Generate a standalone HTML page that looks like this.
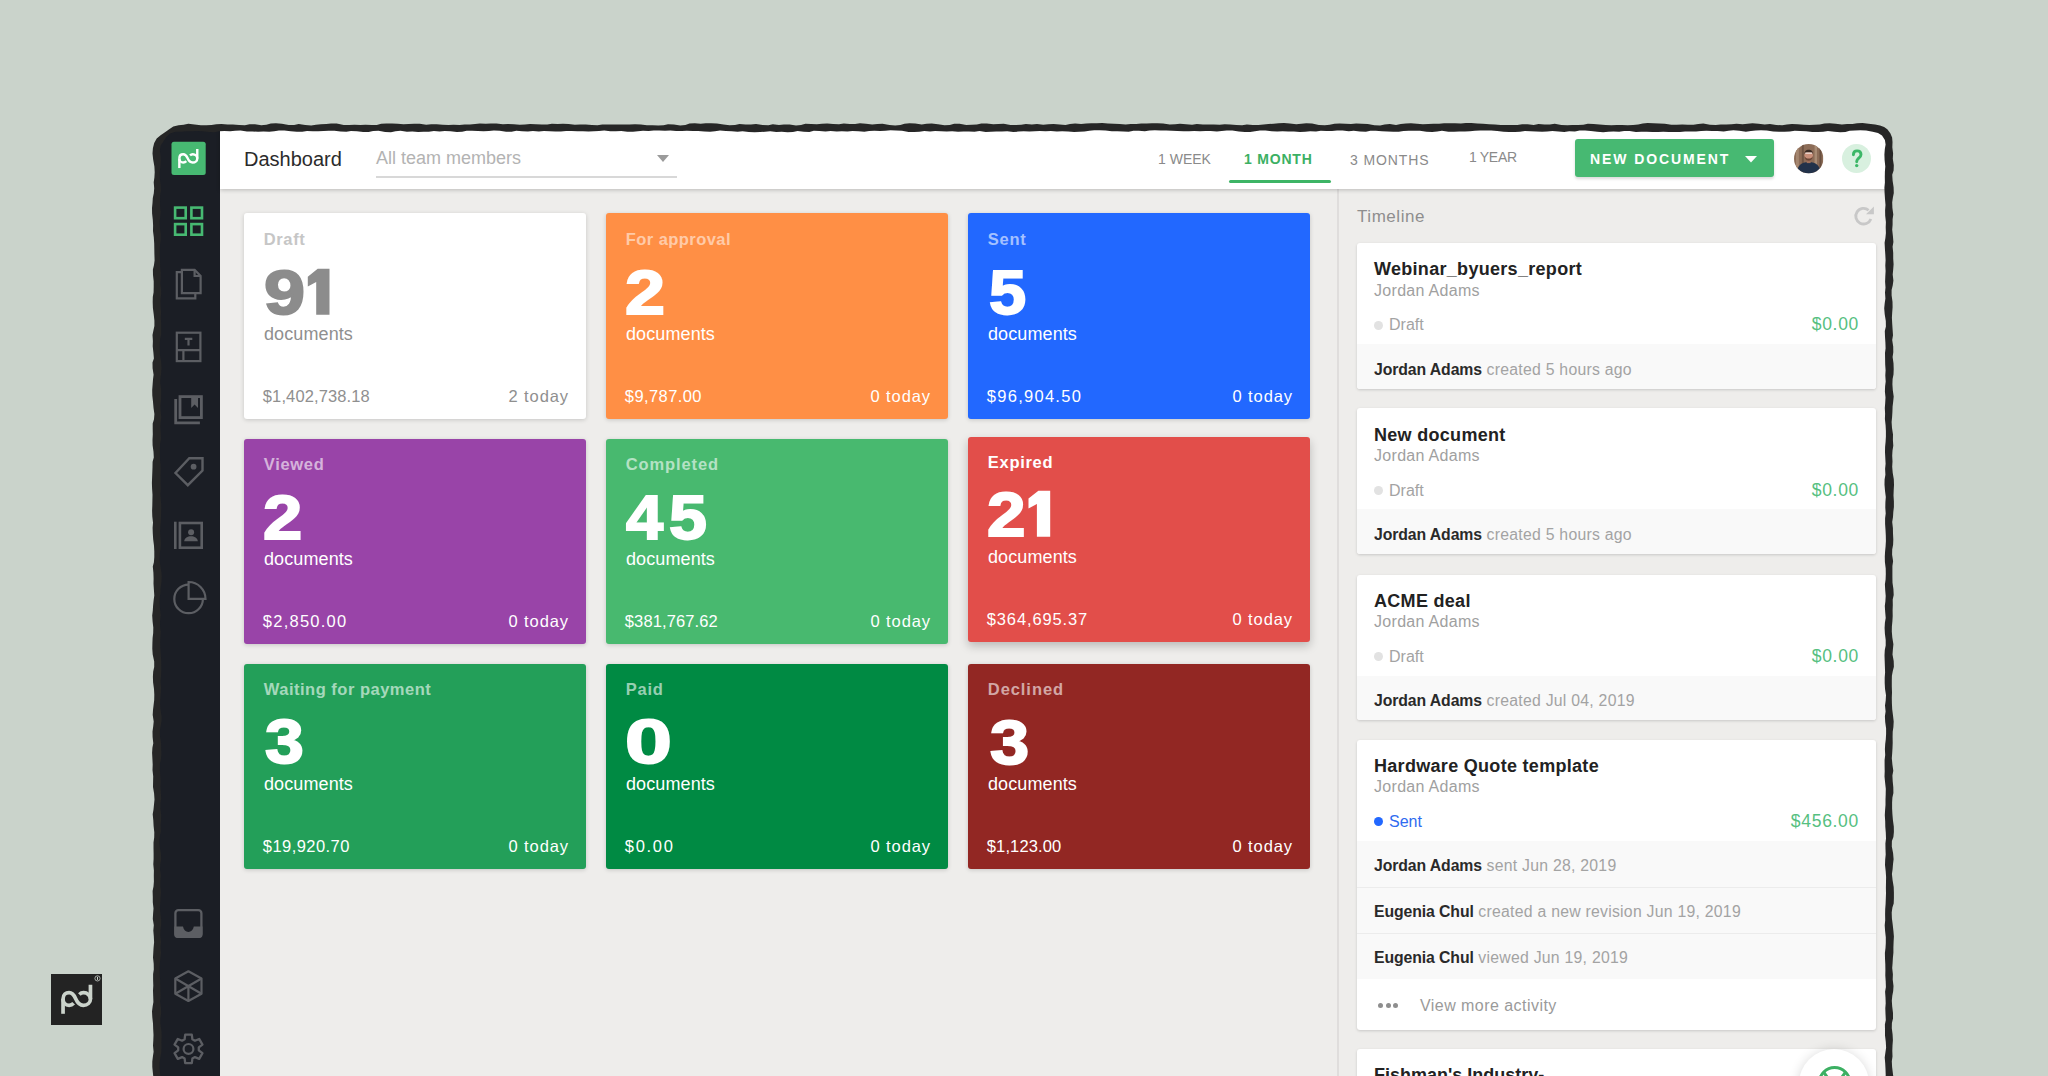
<!DOCTYPE html>
<html><head><meta charset="utf-8"><title>Dashboard</title>
<style>
html,body{margin:0;padding:0;}
body{width:2048px;height:1076px;overflow:hidden;position:relative;background:#cad3cb;font-family:"Liberation Sans",sans-serif;}
.t{position:absolute;white-space:nowrap;}
.r{position:absolute;}
svg{position:absolute;overflow:visible;}
</style></head><body>
<div class="r" style="left:156px;top:127px;width:70px;height:1000px;background:#1b1e25;border-radius:26px 0 0 0;"></div>
<div class="r" style="left:220px;top:189px;width:1670px;height:900px;background:#eeedeb;"></div>
<div class="r" style="left:1337px;top:189px;width:2px;height:900px;background:#dfdddc;"></div>
<div class="r" style="left:220px;top:127.5px;width:1670px;height:61.5px;background:#fff;box-shadow:0 1px 4px rgba(0,0,0,.22);z-index:2;border-radius:0 15px 0 0;"></div>
<div style="position:absolute;left:0;top:0;z-index:3">
<div class="t" style="left:244px;top:147.57px;font-size:20px;line-height:23.00px;color:#2b2b2b;font-weight:400;letter-spacing:0px;">Dashboard</div>
<div class="t" style="left:376px;top:148.41px;font-size:18px;line-height:20.70px;color:#b3b3b3;font-weight:400;letter-spacing:0px;">All team members</div>
<div class="r" style="left:376px;top:176px;width:301px;height:2px;background:#d8d8d8;"></div>
<svg style="left:657px;top:155px" width="12" height="7"><path d="M0 0H12L6 7Z" fill="#9b9b9b"/></svg>
<div class="t" style="left:1158px;top:151.10px;font-size:14px;line-height:16.10px;color:#8a8a8a;font-weight:400;letter-spacing:0px;">1 WEEK</div>
<div class="t" style="left:1244px;top:150.60px;font-size:14px;line-height:16.10px;color:#3cb063;font-weight:700;letter-spacing:0.8px;">1 MONTH</div>
<div class="r" style="left:1229px;top:180px;width:101.5px;height:2.5px;background:#3db465;border-radius:2px;"></div>
<div class="t" style="left:1350px;top:151.60px;font-size:14px;line-height:16.10px;color:#8a8a8a;font-weight:400;letter-spacing:0.9px;">3 MONTHS</div>
<div class="t" style="left:1469px;top:149.10px;font-size:14px;line-height:16.10px;color:#8a8a8a;font-weight:400;letter-spacing:-0.3px;">1 YEAR</div>
<div class="r" style="left:1575px;top:139px;width:199px;height:38px;background:#47b972;border-radius:3px;box-shadow:0 2px 3px rgba(0,0,0,.15);"></div>
<div class="t" style="left:1590px;top:151.40px;font-size:14px;line-height:16.10px;color:#fff;font-weight:700;letter-spacing:1.9px;">NEW DOCUMENT</div>
<svg style="left:1745px;top:156px" width="12" height="7"><path d="M0 0H12L6 6.5Z" fill="#fff"/></svg>
<svg style="left:1793.6px;top:143.6px" width="29.4" height="29.4" viewBox="0 0 30 30"><defs><clipPath id="av"><circle cx="15" cy="15" r="15"/></clipPath></defs><g clip-path="url(#av)"><rect width="30" height="30" fill="#8c6c57"/><rect x="2" width="3" height="30" fill="#a4866f"/><rect x="8" width="2" height="30" fill="#6f5444"/><rect x="21" width="2.5" height="30" fill="#a88b74"/><rect x="26" width="2" height="30" fill="#6a5040"/><path d="M3 30C3 23 7 18.5 15 18.5C23 18.5 27 23 27 30Z" fill="#22324a"/><rect x="13" y="15.5" width="4" height="4" fill="#9c6f5a"/><ellipse cx="15" cy="11.5" rx="4.3" ry="5.3" fill="#c98f7a"/><path d="M10.8 12.5C11 15.5 12.6 17 15 17C17.4 17 19 15.5 19.2 12.5C18.3 14.2 17 14.8 15 14.8C13 14.8 11.7 14.2 10.8 12.5Z" fill="#6a4636"/><path d="M10.7 10C10.7 6.8 12.5 5.8 15 5.8C17.5 5.8 19.3 6.8 19.3 10C18.3 8.8 17 8.6 15 8.6C13 8.6 11.7 8.8 10.7 10Z" fill="#3a2b24"/><rect x="11.5" y="8.6" width="7" height="1.6" fill="#e8d0c8"/></g></svg>
<div class="r" style="left:1842px;top:144px;width:29px;height:29px;background:#d8f0df;border-radius:50%;"></div>
<svg style="left:0;top:0" width="2048" height="1076"><path d="M1853.4 154.8C1853.4 152.2 1855 150.9 1857.1 150.9C1859.4 150.9 1861 152.4 1861 154.6C1861 156.8 1859.1 157.8 1857.9 159C1857.1 159.8 1856.7 160.6 1856.7 161.8" fill="none" stroke="#3cb767" stroke-width="2.9" stroke-linecap="round"/><circle cx="1856.7" cy="165.6" r="1.7" fill="#3cb767"/></svg>
</div>
<div class="r" style="left:244px;top:213px;width:342px;height:205.5px;background:#ffffff;border-radius:3px;box-shadow:0 1px 4px rgba(0,0,0,.17);"></div>
<div class="t" style="left:263.8px;top:229.80px;font-size:16.5px;line-height:18.97px;color:#c6c6c6;font-weight:700;letter-spacing:0.62px;">Draft</div>
<div class="t" style="left:264.15px;top:258.00px;font:700 64px/70px 'Liberation Sans',sans-serif;color:#8c8c8c;-webkit-text-stroke:2px #8c8c8c;transform:scale(1.1545,0.98);transform-origin:0 0">9</div>
<svg style="left:0;top:0" width="2048" height="1076"><path d="M317.70 268.80H329.50V314.80H316.20V282.10L307.80 286.60V276.70Z" fill="#8c8c8c"/></svg>
<div class="t" style="left:264px;top:323.81px;font-size:18px;line-height:20.70px;color:#8f8f8f;font-weight:400;letter-spacing:0.1px;">documents</div>
<div class="t" style="left:262.8px;top:386.80px;font-size:16.5px;line-height:18.97px;color:#8f8f8f;font-weight:400;letter-spacing:0.12px;">$1,402,738.18</div>
<div class="t" style="right:1479px;top:386.80px;font-size:16.5px;line-height:18.97px;color:#8f8f8f;font-weight:400;letter-spacing:0.9px;">2 today</div>
<div class="r" style="left:606px;top:213px;width:342px;height:205.5px;background:#ff8f45;border-radius:3px;box-shadow:0 1px 4px rgba(0,0,0,.17);"></div>
<div class="t" style="left:625.8px;top:229.80px;font-size:16.5px;line-height:18.97px;color:rgba(255,255,255,.55);font-weight:700;letter-spacing:0.44px;">For approval</div>
<div class="t" style="left:625.08px;top:258.20px;font:700 64px/70px 'Liberation Sans',sans-serif;color:#fff;-webkit-text-stroke:2px #fff;transform:scale(1.1242,0.98);transform-origin:0 0">2</div>
<div class="t" style="left:626px;top:323.81px;font-size:18px;line-height:20.70px;color:#fff;font-weight:400;letter-spacing:0.1px;">documents</div>
<div class="t" style="left:624.8px;top:386.80px;font-size:16.5px;line-height:18.97px;color:#fff;font-weight:400;letter-spacing:0.41px;">$9,787.00</div>
<div class="t" style="right:1117px;top:386.80px;font-size:16.5px;line-height:18.97px;color:#fff;font-weight:400;letter-spacing:0.9px;">0 today</div>
<div class="r" style="left:968px;top:213px;width:342px;height:205.5px;background:#2268ff;border-radius:3px;box-shadow:0 1px 4px rgba(0,0,0,.17);"></div>
<div class="t" style="left:987.8px;top:229.80px;font-size:16.5px;line-height:18.97px;color:rgba(255,255,255,.6);font-weight:700;letter-spacing:0.7px;">Sent</div>
<div class="t" style="left:988.76px;top:258.20px;font:700 64px/70px 'Liberation Sans',sans-serif;color:#fff;-webkit-text-stroke:2px #fff;transform:scale(1.0441,0.98);transform-origin:0 0">5</div>
<div class="t" style="left:988px;top:323.81px;font-size:18px;line-height:20.70px;color:#fff;font-weight:400;letter-spacing:0.1px;">documents</div>
<div class="t" style="left:986.8px;top:386.80px;font-size:16.5px;line-height:18.97px;color:#fff;font-weight:400;letter-spacing:1.27px;">$96,904.50</div>
<div class="t" style="right:755px;top:386.80px;font-size:16.5px;line-height:18.97px;color:#fff;font-weight:400;letter-spacing:0.9px;">0 today</div>
<div class="r" style="left:244px;top:438.5px;width:342px;height:205.5px;background:#9944a8;border-radius:3px;box-shadow:0 1px 4px rgba(0,0,0,.17);"></div>
<div class="t" style="left:263.8px;top:455.30px;font-size:16.5px;line-height:18.97px;color:rgba(255,255,255,.6);font-weight:700;letter-spacing:0.68px;">Viewed</div>
<div class="t" style="left:262.90px;top:482.50px;font:700 64px/70px 'Liberation Sans',sans-serif;color:#fff;-webkit-text-stroke:2px #fff;transform:scale(1.1030,0.98);transform-origin:0 0">2</div>
<div class="t" style="left:264px;top:549.31px;font-size:18px;line-height:20.70px;color:#fff;font-weight:400;letter-spacing:0.1px;">documents</div>
<div class="t" style="left:262.8px;top:612.30px;font-size:16.5px;line-height:18.97px;color:#fff;font-weight:400;letter-spacing:1.25px;">$2,850.00</div>
<div class="t" style="right:1479px;top:612.30px;font-size:16.5px;line-height:18.97px;color:#fff;font-weight:400;letter-spacing:0.9px;">0 today</div>
<div class="r" style="left:606px;top:438.5px;width:342px;height:205.5px;background:#48b96f;border-radius:3px;box-shadow:0 1px 4px rgba(0,0,0,.17);"></div>
<div class="t" style="left:625.8px;top:455.30px;font-size:16.5px;line-height:18.97px;color:rgba(255,255,255,.6);font-weight:700;letter-spacing:0.88px;">Completed</div>
<div class="t" style="left:626.40px;top:483.20px;font:700 64px/70px 'Liberation Sans',sans-serif;color:#fff;-webkit-text-stroke:2px #fff;transform:scale(1.0444,0.98);transform-origin:0 0">4</div>
<div class="t" style="left:668.94px;top:483.20px;font:700 64px/70px 'Liberation Sans',sans-serif;color:#fff;-webkit-text-stroke:2px #fff;transform:scale(1.0647,0.98);transform-origin:0 0">5</div>
<div class="t" style="left:626px;top:549.31px;font-size:18px;line-height:20.70px;color:#fff;font-weight:400;letter-spacing:0.1px;">documents</div>
<div class="t" style="left:624.8px;top:612.30px;font-size:16.5px;line-height:18.97px;color:#fff;font-weight:400;letter-spacing:0.12px;">$381,767.62</div>
<div class="t" style="right:1117px;top:612.30px;font-size:16.5px;line-height:18.97px;color:#fff;font-weight:400;letter-spacing:0.9px;">0 today</div>
<div class="r" style="left:968px;top:436.5px;width:342px;height:205.5px;background:#e24e4a;border-radius:3px;box-shadow:0 4px 10px rgba(0,0,0,.22);"></div>
<div class="t" style="left:987.8px;top:453.30px;font-size:16.5px;line-height:18.97px;color:#fff;font-weight:700;letter-spacing:0.7px;">Expired</div>
<div class="t" style="left:987.42px;top:479.90px;font:700 64px/70px 'Liberation Sans',sans-serif;color:#fff;-webkit-text-stroke:2px #fff;transform:scale(1.0818,0.98);transform-origin:0 0">2</div>
<svg style="left:0;top:0" width="2048" height="1076"><path d="M1038.40 490.70H1050.20V536.70H1036.90V504.00L1028.50 508.50V498.60Z" fill="#fff"/></svg>
<div class="t" style="left:988px;top:547.31px;font-size:18px;line-height:20.70px;color:#fff;font-weight:400;letter-spacing:0.1px;">documents</div>
<div class="t" style="left:986.8px;top:610.30px;font-size:16.5px;line-height:18.97px;color:#fff;font-weight:400;letter-spacing:0.86px;">$364,695.37</div>
<div class="t" style="right:755px;top:610.30px;font-size:16.5px;line-height:18.97px;color:#fff;font-weight:400;letter-spacing:0.9px;">0 today</div>
<div class="r" style="left:244px;top:663.5px;width:342px;height:205.5px;background:#239f59;border-radius:3px;box-shadow:0 1px 4px rgba(0,0,0,.17);"></div>
<div class="t" style="left:263.8px;top:680.30px;font-size:16.5px;line-height:18.97px;color:rgba(255,255,255,.6);font-weight:700;letter-spacing:0.5px;">Waiting for payment</div>
<div class="t" style="left:265.10px;top:707.20px;font:700 64px/70px 'Liberation Sans',sans-serif;color:#fff;-webkit-text-stroke:2px #fff;transform:scale(1.0912,0.98);transform-origin:0 0">3</div>
<div class="t" style="left:264px;top:774.31px;font-size:18px;line-height:20.70px;color:#fff;font-weight:400;letter-spacing:0.1px;">documents</div>
<div class="t" style="left:262.8px;top:837.30px;font-size:16.5px;line-height:18.97px;color:#fff;font-weight:400;letter-spacing:0.44px;">$19,920.70</div>
<div class="t" style="right:1479px;top:837.30px;font-size:16.5px;line-height:18.97px;color:#fff;font-weight:400;letter-spacing:0.9px;">0 today</div>
<div class="r" style="left:606px;top:663.5px;width:342px;height:205.5px;background:#008a43;border-radius:3px;box-shadow:0 1px 4px rgba(0,0,0,.17);"></div>
<div class="t" style="left:625.8px;top:680.30px;font-size:16.5px;line-height:18.97px;color:rgba(255,255,255,.6);font-weight:700;letter-spacing:0.77px;">Paid</div>
<div class="t" style="left:624.96px;top:707.20px;font:700 64px/70px 'Liberation Sans',sans-serif;color:#fff;-webkit-text-stroke:2px #fff;transform:scale(1.3188,0.98);transform-origin:0 0">0</div>
<div class="t" style="left:626px;top:774.31px;font-size:18px;line-height:20.70px;color:#fff;font-weight:400;letter-spacing:0.1px;">documents</div>
<div class="t" style="left:624.8px;top:837.30px;font-size:16.5px;line-height:18.97px;color:#fff;font-weight:400;letter-spacing:1.7px;">$0.00</div>
<div class="t" style="right:1117px;top:837.30px;font-size:16.5px;line-height:18.97px;color:#fff;font-weight:400;letter-spacing:0.9px;">0 today</div>
<div class="r" style="left:968px;top:663.5px;width:342px;height:205.5px;background:#922723;border-radius:3px;box-shadow:0 1px 4px rgba(0,0,0,.17);"></div>
<div class="t" style="left:987.8px;top:680.30px;font-size:16.5px;line-height:18.97px;color:rgba(255,255,255,.6);font-weight:700;letter-spacing:0.93px;">Declined</div>
<div class="t" style="left:989.60px;top:707.50px;font:700 64px/70px 'Liberation Sans',sans-serif;color:#fff;-webkit-text-stroke:2px #fff;transform:scale(1.1000,0.98);transform-origin:0 0">3</div>
<div class="t" style="left:988px;top:774.31px;font-size:18px;line-height:20.70px;color:#fff;font-weight:400;letter-spacing:0.1px;">documents</div>
<div class="t" style="left:986.8px;top:837.30px;font-size:16.5px;line-height:18.97px;color:#fff;font-weight:400;letter-spacing:0.12px;">$1,123.00</div>
<div class="t" style="right:755px;top:837.30px;font-size:16.5px;line-height:18.97px;color:#fff;font-weight:400;letter-spacing:0.9px;">0 today</div>
<div class="t" style="left:1357px;top:207.33px;font-size:17px;line-height:19.55px;color:#8e8e8e;font-weight:400;letter-spacing:0.55px;">Timeline</div>
<svg style="left:0;top:0" width="2048" height="1076"><path d="M1870.9 218.9A7.8 7.8 0 1 1 1868.6 210.2" fill="none" stroke="#c8c8c8" stroke-width="2.8"/><path d="M1873.9 206.4V214.3H1866Z" fill="#c8c8c8"/></svg>
<div class="r" style="left:1356.5px;top:243px;width:519.5px;height:145.5px;background:#fff;border-radius:3px;box-shadow:0 1px 3px rgba(0,0,0,.16);"></div>
<div class="t" style="left:1374px;top:259.41px;font-size:18px;line-height:20.70px;color:#222;font-weight:700;letter-spacing:0.3px;">Webinar_byuers_report</div>
<div class="t" style="left:1374px;top:281.76px;font-size:16px;line-height:18.40px;color:#a0a0a0;font-weight:400;letter-spacing:0.3px;">Jordan Adams</div>
<div class="r" style="left:1373.8px;top:320.6px;width:9px;height:9px;background:#e2e2e2;border-radius:50%;"></div>
<div class="t" style="left:1389px;top:316.26px;font-size:16px;line-height:18.40px;color:#a3a3a3;font-weight:400;letter-spacing:0px;">Draft</div>
<div class="t" style="right:189px;top:314.37px;font-size:17.5px;line-height:20.12px;color:#56c07f;font-weight:400;letter-spacing:0.7px;">$0.00</div>
<div class="r" style="left:1356.5px;top:344px;width:519.5px;height:44.5px;background:#f9f9f9;border-radius:0 0 3px 3px;"></div>
<div class="t" style="left:1374px;top:360.94px;font-size:15.8px;line-height:18.17px;color:#a3a3a3;font-weight:400;letter-spacing:0.25px;"><b style="color:#2a2a2a;letter-spacing:-0.1px">Jordan Adams</b> created 5 hours ago</div>
<div class="r" style="left:1356.5px;top:408.3px;width:519.5px;height:146.2px;background:#fff;border-radius:3px;box-shadow:0 1px 3px rgba(0,0,0,.16);"></div>
<div class="t" style="left:1374px;top:424.71px;font-size:18px;line-height:20.70px;color:#222;font-weight:700;letter-spacing:0.3px;">New document</div>
<div class="t" style="left:1374px;top:447.06px;font-size:16px;line-height:18.40px;color:#a0a0a0;font-weight:400;letter-spacing:0.3px;">Jordan Adams</div>
<div class="r" style="left:1373.8px;top:485.9px;width:9px;height:9px;background:#e2e2e2;border-radius:50%;"></div>
<div class="t" style="left:1389px;top:481.56px;font-size:16px;line-height:18.40px;color:#a3a3a3;font-weight:400;letter-spacing:0px;">Draft</div>
<div class="t" style="right:189px;top:479.67px;font-size:17.5px;line-height:20.12px;color:#56c07f;font-weight:400;letter-spacing:0.7px;">$0.00</div>
<div class="r" style="left:1356.5px;top:509.3px;width:519.5px;height:45.19999999999999px;background:#f9f9f9;border-radius:0 0 3px 3px;"></div>
<div class="t" style="left:1374px;top:526.24px;font-size:15.8px;line-height:18.17px;color:#a3a3a3;font-weight:400;letter-spacing:0.25px;"><b style="color:#2a2a2a;letter-spacing:-0.1px">Jordan Adams</b> created 5 hours ago</div>
<div class="r" style="left:1356.5px;top:574.5px;width:519.5px;height:145.5px;background:#fff;border-radius:3px;box-shadow:0 1px 3px rgba(0,0,0,.16);"></div>
<div class="t" style="left:1374px;top:590.91px;font-size:18px;line-height:20.70px;color:#222;font-weight:700;letter-spacing:0.3px;">ACME deal</div>
<div class="t" style="left:1374px;top:613.26px;font-size:16px;line-height:18.40px;color:#a0a0a0;font-weight:400;letter-spacing:0.3px;">Jordan Adams</div>
<div class="r" style="left:1373.8px;top:652.1px;width:9px;height:9px;background:#e2e2e2;border-radius:50%;"></div>
<div class="t" style="left:1389px;top:647.76px;font-size:16px;line-height:18.40px;color:#a3a3a3;font-weight:400;letter-spacing:0px;">Draft</div>
<div class="t" style="right:189px;top:645.87px;font-size:17.5px;line-height:20.12px;color:#56c07f;font-weight:400;letter-spacing:0.7px;">$0.00</div>
<div class="r" style="left:1356.5px;top:675.5px;width:519.5px;height:44.5px;background:#f9f9f9;border-radius:0 0 3px 3px;"></div>
<div class="t" style="left:1374px;top:692.44px;font-size:15.8px;line-height:18.17px;color:#a3a3a3;font-weight:400;letter-spacing:0.25px;"><b style="color:#2a2a2a;letter-spacing:-0.1px">Jordan Adams</b> created Jul 04, 2019</div>
<div class="r" style="left:1356.5px;top:739.5px;width:519.5px;height:290px;background:#fff;border-radius:3px;box-shadow:0 1px 3px rgba(0,0,0,.16);"></div>
<div class="t" style="left:1374px;top:755.91px;font-size:18px;line-height:20.70px;color:#222;font-weight:700;letter-spacing:0.3px;">Hardware Quote template</div>
<div class="t" style="left:1374px;top:778.26px;font-size:16px;line-height:18.40px;color:#a0a0a0;font-weight:400;letter-spacing:0.3px;">Jordan Adams</div>
<div class="r" style="left:1373.8px;top:817.1px;width:9px;height:9px;background:#2268ff;border-radius:50%;"></div>
<div class="t" style="left:1389px;top:812.76px;font-size:16px;line-height:18.40px;color:#2f6bf0;font-weight:400;letter-spacing:0px;">Sent</div>
<div class="t" style="right:189px;top:810.87px;font-size:17.5px;line-height:20.12px;color:#56c07f;font-weight:400;letter-spacing:0.7px;">$456.00</div>
<div class="r" style="left:1356.5px;top:840.5px;width:519.5px;height:46px;background:#f9f9f9;"></div>
<div class="t" style="left:1374px;top:857.44px;font-size:15.8px;line-height:18.17px;color:#a3a3a3;font-weight:400;letter-spacing:0.25px;"><b style="color:#2a2a2a;letter-spacing:-0.1px">Jordan Adams</b> sent Jun 28, 2019</div>
<div class="r" style="left:1356.5px;top:886.5px;width:519.5px;height:46px;background:#f9f9f9;border-top:1px solid #ececec;box-sizing:border-box;"></div>
<div class="t" style="left:1374px;top:903.44px;font-size:15.8px;line-height:18.17px;color:#a3a3a3;font-weight:400;letter-spacing:0.25px;"><b style="color:#2a2a2a;letter-spacing:-0.1px">Eugenia Chul</b> created a new revision Jun 19, 2019</div>
<div class="r" style="left:1356.5px;top:932.5px;width:519.5px;height:46px;background:#f9f9f9;border-top:1px solid #ececec;box-sizing:border-box;"></div>
<div class="t" style="left:1374px;top:949.44px;font-size:15.8px;line-height:18.17px;color:#a3a3a3;font-weight:400;letter-spacing:0.25px;"><b style="color:#2a2a2a;letter-spacing:-0.1px">Eugenia Chul</b> viewed Jun 19, 2019</div>
<div class="r" style="left:1378px;top:1002.5px;width:5px;height:5px;background:#8e8e8e;border-radius:50%;"></div>
<div class="r" style="left:1385.5px;top:1002.5px;width:5px;height:5px;background:#8e8e8e;border-radius:50%;"></div>
<div class="r" style="left:1393px;top:1002.5px;width:5px;height:5px;background:#8e8e8e;border-radius:50%;"></div>
<div class="t" style="left:1420px;top:996.76px;font-size:16px;line-height:18.40px;color:#9a9a9a;font-weight:400;letter-spacing:0.45px;">View more activity</div>
<div class="r" style="left:1356.5px;top:1049px;width:519.5px;height:100px;background:#fff;border-radius:3px;box-shadow:0 1px 3px rgba(0,0,0,.16);"></div>
<div class="t" style="left:1374px;top:1065.41px;font-size:18px;line-height:20.70px;color:#222;font-weight:700;letter-spacing:0px;">Fishman's Industry-</div>
<div class="r" style="left:1799px;top:1049.3px;width:70px;height:70px;background:#fff;border-radius:50%;box-shadow:0 1px 12px rgba(0,0,0,.16);z-index:4;"></div>
<svg style="left:0;top:0;z-index:4" width="2048" height="1076"><circle cx="1834.6" cy="1082.8" r="15.3" fill="none" stroke="#3cb063" stroke-width="3"/><path d="M1823.5 1072L1830 1081M1845.7 1072L1839.2 1081" stroke="#3cb063" stroke-width="3" fill="none"/></svg>
<svg style="left:0;top:0" width="2048" height="1076" viewBox="0 0 2048 1076">
<rect x="171.5" y="141.7" width="34.2" height="33.2" rx="2.5" fill="#47b972"/>
<g transform="translate(171.5 141.7) scale(0.654)" fill="none" stroke="#fff" stroke-width="3.7"><path d="M12 40.3V25.5"/><path d="M12 25.5C12 21 14.8 19.2 18 19.2C21.5 19.2 23 21.5 24.5 25C26 28.5 28 31.8 32.3 31.8C36.5 31.8 39.4 29 39.4 25.5V11.2"/><path d="M28.3 21C29.5 19.8 31 19.2 32.5 19.2C36.3 19.2 39.4 22 39.4 25.5"/><path d="M12 25.5C12 29 14.5 31.8 18 31.8C20 31.8 21.5 31 22.6 29.8"/></g>
<g fill="none" stroke="#47b972" stroke-width="2.6"><rect x="175.1" y="207.6" width="10.6" height="10.6"/><rect x="191.4" y="207.6" width="10.6" height="10.6"/><rect x="175.1" y="224.1" width="10.6" height="10.6"/><rect x="191.4" y="224.1" width="10.6" height="10.6"/></g>
<g fill="none" stroke="#5c5e63" stroke-width="2.2">
<path d="M181.9 269.8H194.6L200.6 276V293.2H181.9Z"/><path d="M194.6 269.8V276H200.6"/><path d="M181.9 272.2H176.8V298.3H195.3V293.2"/>
<rect x="176.8" y="332.7" width="23.6" height="28.4"/><path d="M176.8 350.2H200.4M183.4 350.2V361.1M184.8 338.8H192.3M188.5 338.8V345.6"/>
</g>
<g fill="none" stroke="#5c5e63" stroke-width="2.8">
<rect x="180" y="396.6" width="21.4" height="21"/><path d="M175.7 399.1V422.8H199.9"/>
</g>
<path d="M191.2 396.6H198V408L194.6 404.6L191.2 408Z" fill="#5c5e63"/>
<g fill="none" stroke="#5c5e63" stroke-width="2.4" stroke-linejoin="miter">
<path d="M189.3 458.3H202.5V470.6L187.8 485.2L175.5 473Z"/>
</g>
<circle cx="193.6" cy="466.7" r="2.9" fill="#5c5e63"/>
<g fill="none" stroke="#5c5e63" stroke-width="2.6"><rect x="179.9" y="523" width="21.8" height="24.7"/><path d="M175.3 521.7V549"/></g>
<circle cx="191.1" cy="532.3" r="3" fill="#5c5e63"/><path d="M184.2 541.2C184.5 537.8 187.6 536.2 191 536.2C194.4 536.2 197.5 537.8 197.8 541.2Z" fill="#5c5e63"/>
<g fill="none" stroke="#5c5e63" stroke-width="2.2"><path d="M188.6 584.6A14.3 14.3 0 1 0 202.9 598.9"/><path d="M188.6 598.9V582A16.9 16.9 0 0 1 205.5 598.9Z"/></g>
<rect x="175.4" y="910.2" width="26" height="26.6" rx="3" fill="none" stroke="#5c5e63" stroke-width="2.3"/>
<path d="M174.3 926.6H183C183.5 930 185.8 932 188.4 932C191 932 193.3 930 193.8 926.6H202.5V935C202.5 936.8 201 938 199.3 938H177.5C175.8 938 174.3 936.8 174.3 935Z" fill="#5c5e63"/>
<g fill="none" stroke="#5c5e63" stroke-width="2.2" stroke-linejoin="round"><path d="M188.4 971.3L201.5 978.5V993.8L188.4 1001L175.3 993.8V978.5Z"/><path d="M175.3 978.5L201.5 993.8M201.5 978.5L175.3 993.8M188.4 986.1V1001"/></g>
</svg>
<svg style="left:0;top:0" width="2048" height="1076"><path d="M184.60 1039.26 L185.22 1034.67 L191.78 1034.67 L192.40 1039.26 L194.90 1040.70 L199.18 1038.94 L202.46 1044.63 L198.80 1047.45 L198.80 1050.35 L202.46 1053.17 L199.18 1058.86 L194.90 1057.10 L192.40 1058.54 L191.78 1063.13 L185.22 1063.13 L184.60 1058.54 L182.10 1057.10 L177.82 1058.86 L174.54 1053.17 L178.20 1050.35 L178.20 1047.45 L174.54 1044.63 L177.82 1038.94 L182.10 1040.70Z" fill="none" stroke="#5c5e63" stroke-width="2.3" stroke-linejoin="round"/><circle cx="188.5" cy="1048.9" r="4.9" fill="none" stroke="#5c5e63" stroke-width="2.2"/></svg>
<div class="r" style="left:51.05px;top:973.5px;width:51.3px;height:51.3px;background:#232323;"></div>
<svg style="left:0;top:0" width="2048" height="1076"><g transform="translate(51.05 973.5)" fill="none" stroke="#cbd3cb" stroke-width="3.7"><path d="M12 40.3V25.5"/><path d="M12 25.5C12 21 14.8 19.2 18 19.2C21.5 19.2 23 21.5 24.5 25C26 28.5 28 31.8 32.3 31.8C36.5 31.8 39.4 29 39.4 25.5V11.2"/><path d="M28.3 21C29.5 19.8 31 19.2 32.5 19.2C36.3 19.2 39.4 22 39.4 25.5"/><path d="M12 25.5C12 29 14.5 31.8 18 31.8C20 31.8 21.5 31 22.6 29.8"/></g><circle cx="97.5" cy="978.4" r="2.6" fill="none" stroke="#b8bdb8" stroke-width="0.9"/><path d="M97.5 976.9V979.9" stroke="#cbd3cb" stroke-width="1"/></svg>
<svg style="left:0;top:0;z-index:5" width="2048" height="1076"><path fill-rule="evenodd" fill="#262626" d="M152.9 1199.6 L152.6 1193.8 L153.1 1188.8 L152.6 1182.8 L153.0 1177.7 L152.8 1172.0 L152.4 1166.1 L152.8 1160.9 L152.4 1155.1 L152.6 1149.8 L152.2 1143.9 L152.2 1138.4 L153.1 1133.8 L153.6 1128.8 L152.6 1122.3 L152.6 1116.8 L153.6 1112.3 L154.2 1107.4 L153.7 1101.3 L153.4 1095.6 L153.8 1090.5 L153.0 1084.1 L153.6 1079.2 L152.9 1073.0 L152.3 1066.9 L152.3 1061.4 L152.9 1056.5 L153.6 1051.7 L153.0 1045.6 L153.3 1040.4 L153.5 1035.1 L153.2 1029.3 L153.0 1023.6 L152.3 1017.3 L152.0 1011.6 L152.6 1006.7 L153.4 1002.0 L153.2 996.2 L153.0 990.5 L153.3 985.4 L153.1 979.7 L153.1 974.1 L153.8 969.4 L153.7 963.7 L153.0 957.5 L153.3 952.3 L153.6 947.2 L154.1 942.2 L153.8 936.3 L153.3 930.4 L153.8 925.3 L152.8 918.9 L153.1 913.6 L153.5 908.5 L152.8 902.3 L152.8 896.8 L152.6 891.0 L153.5 886.5 L153.9 881.4 L153.8 875.8 L153.9 870.4 L153.3 864.3 L153.6 859.1 L153.6 853.6 L153.5 847.9 L153.5 842.4 L154.2 837.6 L154.3 832.3 L153.6 826.1 L153.3 820.3 L152.7 814.2 L153.5 809.4 L154.0 804.4 L154.5 799.4 L154.1 793.5 L153.0 787.0 L153.1 781.5 L153.2 776.2 L152.5 769.9 L152.7 764.6 L152.4 758.8 L152.1 753.0 L152.4 747.8 L153.3 743.2 L152.6 737.0 L152.5 731.4 L153.2 726.6 L153.7 721.5 L152.7 715.1 L153.0 709.9 L153.6 705.0 L154.2 700.1 L154.3 694.7 L154.0 688.9 L153.1 682.4 L152.9 676.8 L153.2 671.6 L154.2 667.0 L154.2 661.5 L152.7 654.6 L152.3 648.7 L152.4 643.3 L152.6 638.0 L153.2 633.0 L153.3 627.6 L152.6 621.4 L152.2 615.5 L152.8 610.6 L153.1 605.4 L153.6 600.4 L154.3 595.6 L153.9 589.7 L153.5 583.8 L153.6 578.4 L153.4 572.7 L152.8 566.6 L153.9 562.2 L154.3 557.1 L154.3 551.6 L154.0 545.8 L153.2 539.5 L152.8 533.6 L152.6 527.8 L153.0 522.8 L152.3 516.6 L152.1 510.8 L152.3 505.5 L152.4 500.1 L152.5 494.8 L152.1 488.8 L151.9 483.1 L152.1 477.8 L152.3 472.5 L152.5 467.2 L152.6 461.8 L153.8 457.5 L153.5 451.7 L152.6 445.3 L152.5 439.7 L152.8 434.5 L152.7 428.9 L152.7 423.4 L154.0 419.2 L154.4 414.1 L153.5 407.7 L153.0 401.7 L152.3 395.4 L152.2 389.9 L152.6 384.8 L153.0 379.6 L153.6 374.7 L152.6 368.2 L152.5 362.6 L153.9 358.5 L153.4 352.5 L152.7 346.3 L152.9 341.0 L152.5 335.1 L153.4 330.5 L154.4 326.0 L154.4 320.5 L153.7 314.3 L152.9 308.0 L152.7 302.3 L152.8 296.9 L153.6 292.2 L153.7 286.8 L153.7 281.3 L153.0 275.1 L152.9 269.5 L154.0 265.1 L154.6 260.2 L154.4 254.5 L154.3 248.8 L154.2 243.3 L153.8 237.3 L153.0 231.0 L153.1 225.6 L152.8 219.8 L152.1 213.6 L152.0 208.0 L152.5 203.0 L152.8 197.9 L153.8 193.3 L154.2 188.2 L153.7 182.3 L154.4 177.4 L154.7 172.3 L154.4 166.4 L153.2 159.7 L152.5 153.5 L152.9 148.2 L154.2 143.1 L156.7 138.6 L160.6 135.3 L165.0 132.3 L169.2 129.2 L173.3 126.4 L178.5 125.2 L183.7 124.7 L188.3 123.8 L194.6 124.6 L200.9 125.3 L206.3 125.2 L211.5 124.9 L216.3 124.2 L221.4 123.9 L227.6 124.5 L232.9 124.4 L239.1 125.0 L244.9 125.3 L249.5 124.3 L255.0 124.3 L261.3 125.2 L266.4 124.8 L270.8 123.6 L275.9 123.2 L281.9 123.7 L288.7 125.0 L294.1 124.9 L298.7 124.0 L305.2 125.0 L311.2 125.5 L316.0 124.8 L320.9 124.2 L326.3 124.1 L331.1 123.4 L336.7 123.5 L343.7 125.0 L349.2 124.9 L354.5 124.7 L360.4 125.1 L365.5 124.7 L371.5 125.1 L376.8 124.9 L381.2 123.8 L386.4 123.5 L392.0 123.6 L397.6 123.7 L403.5 124.2 L408.8 123.9 L414.2 123.8 L419.7 123.8 L426.2 124.7 L431.2 124.3 L436.6 124.2 L442.6 124.7 L448.5 125.0 L453.6 124.7 L459.5 125.0 L464.6 124.6 L469.9 124.4 L475.1 124.1 L479.9 123.4 L485.7 123.7 L490.9 123.4 L496.4 123.4 L502.9 124.3 L507.9 123.9 L513.8 124.2 L519.8 124.7 L525.0 124.4 L530.1 124.0 L535.9 124.3 L541.7 124.6 L547.3 124.6 L551.9 123.8 L557.7 124.0 L562.9 123.7 L568.6 123.9 L574.9 124.7 L580.2 124.5 L585.8 124.6 L591.8 125.1 L597.4 125.2 L602.3 124.5 L607.7 124.5 L613.1 124.4 L618.7 124.4 L624.4 124.6 L629.6 124.4 L635.1 124.3 L640.9 124.6 L647.0 125.2 L652.5 125.2 L658.2 125.4 L663.5 125.2 L668.0 124.2 L673.9 124.5 L680.2 125.4 L685.4 125.0 L689.5 123.6 L694.8 123.3 L700.6 123.7 L705.7 123.3 L711.2 123.3 L716.9 123.5 L723.5 124.5 L729.6 125.2 L735.0 125.0 L739.5 124.0 L745.6 124.6 L751.0 124.5 L756.0 124.0 L762.6 125.1 L768.3 125.2 L772.9 124.3 L779.0 124.9 L783.9 124.4 L789.6 124.5 L796.0 125.4 L801.1 125.0 L805.4 123.8 L811.1 124.0 L816.8 124.2 L822.0 123.8 L827.2 123.5 L833.1 123.9 L839.0 124.3 L843.8 123.6 L849.8 124.1 L855.1 123.9 L860.0 123.3 L866.0 123.8 L872.2 124.4 L877.4 124.1 L882.5 123.8 L889.4 125.1 L895.2 125.4 L900.4 125.1 L904.5 123.7 L909.6 123.3 L915.3 123.5 L921.7 124.4 L926.6 123.8 L931.8 123.4 L938.0 124.2 L944.6 125.2 L949.8 125.0 L954.2 123.8 L959.6 123.8 L966.3 124.9 L971.7 124.8 L976.9 124.5 L981.3 123.4 L986.8 123.4 L993.3 124.3 L998.5 124.0 L1003.7 123.7 L1010.4 124.9 L1016.0 125.0 L1021.2 124.7 L1025.9 123.9 L1031.9 124.4 L1037.0 123.9 L1043.2 124.7 L1048.4 124.3 L1053.6 124.0 L1059.6 124.6 L1065.5 125.0 L1070.0 123.9 L1075.1 123.5 L1081.1 124.0 L1086.2 123.6 L1091.3 123.2 L1096.8 123.2 L1102.2 123.1 L1108.0 123.4 L1113.8 123.7 L1119.6 124.0 L1125.7 124.5 L1130.8 124.1 L1136.2 124.0 L1141.3 123.6 L1146.7 123.5 L1151.9 123.2 L1157.5 123.3 L1163.1 123.4 L1169.7 124.5 L1175.1 124.3 L1180.0 123.7 L1186.1 124.3 L1192.1 124.8 L1196.8 124.0 L1202.9 124.6 L1208.2 124.4 L1213.8 124.5 L1219.7 124.8 L1224.7 124.3 L1230.2 124.4 L1236.3 124.9 L1242.1 125.2 L1246.9 124.5 L1252.8 124.9 L1258.4 125.0 L1263.5 124.6 L1268.5 124.1 L1273.6 123.7 L1278.6 123.2 L1284.0 123.1 L1289.9 123.4 L1296.3 124.3 L1301.3 123.8 L1306.3 123.3 L1312.0 123.5 L1318.9 124.9 L1324.8 125.3 L1329.7 124.7 L1334.4 123.8 L1339.6 123.6 L1345.3 123.7 L1351.0 123.9 L1356.2 123.6 L1361.9 123.8 L1367.7 124.1 L1374.4 125.3 L1380.1 125.5 L1384.6 124.5 L1389.8 124.1 L1396.0 124.9 L1400.8 124.1 L1405.8 123.6 L1410.9 123.2 L1417.0 123.8 L1422.9 124.2 L1428.3 124.1 L1433.5 123.8 L1439.1 123.8 L1444.0 123.2 L1449.6 123.3 L1455.1 123.3 L1460.9 123.6 L1465.9 123.1 L1471.3 123.0 L1477.3 123.5 L1483.0 123.7 L1489.1 124.3 L1494.9 124.6 L1500.7 124.9 L1506.2 124.9 L1511.9 125.0 L1517.4 125.1 L1522.1 124.2 L1527.6 124.2 L1533.8 124.9 L1538.5 124.1 L1544.5 124.6 L1549.8 124.4 L1554.7 123.8 L1561.3 124.9 L1567.3 125.3 L1572.4 124.9 L1578.0 125.0 L1583.3 124.8 L1587.8 123.8 L1593.6 124.1 L1599.5 124.5 L1605.6 125.1 L1611.3 125.3 L1616.7 125.1 L1621.9 124.9 L1627.7 125.2 L1633.1 125.0 L1638.2 124.6 L1642.7 123.6 L1647.6 123.0 L1653.4 123.3 L1659.2 123.6 L1664.8 123.7 L1671.3 124.7 L1676.8 124.7 L1682.3 124.6 L1687.9 124.7 L1693.4 124.7 L1698.3 124.1 L1703.3 123.6 L1709.9 124.7 L1715.7 124.9 L1720.7 124.5 L1726.2 124.5 L1731.6 124.3 L1736.5 123.7 L1742.6 124.3 L1747.5 123.7 L1752.5 123.2 L1758.5 123.7 L1764.7 124.4 L1769.9 124.0 L1776.2 124.9 L1782.2 125.3 L1786.9 124.5 L1791.9 124.1 L1797.7 124.3 L1803.7 124.8 L1809.4 125.0 L1814.7 124.8 L1819.8 124.4 L1824.3 123.4 L1829.7 123.2 L1835.7 123.8 L1841.9 124.5 L1847.1 124.1 L1852.5 124.0 L1857.1 123.2 L1862.5 123.1 L1868.7 123.7 L1875.1 124.6 L1880.0 125.5 L1884.1 127.0 L1887.3 129.3 L1890.3 133.2 L1892.1 137.6 L1892.5 142.0 L1892.3 147.3 L1893.1 153.6 L1892.8 158.8 L1893.8 165.3 L1893.6 170.6 L1892.2 174.7 L1892.6 180.7 L1893.6 187.2 L1893.8 192.9 L1892.9 197.4 L1892.2 202.3 L1892.4 208.0 L1893.3 214.4 L1892.6 219.2 L1892.6 224.7 L1892.2 229.8 L1892.9 236.1 L1893.4 242.1 L1892.6 246.8 L1893.2 252.8 L1893.2 258.4 L1893.6 264.3 L1893.2 269.4 L1892.7 274.4 L1893.4 280.6 L1892.7 285.5 L1891.6 289.9 L1891.6 295.3 L1892.5 301.7 L1892.6 307.3 L1892.2 312.5 L1891.9 317.7 L1892.2 323.5 L1892.6 329.4 L1893.0 335.3 L1892.2 340.1 L1893.2 346.5 L1893.3 352.2 L1892.6 356.9 L1893.5 363.3 L1893.7 369.1 L1893.5 374.4 L1892.6 379.0 L1892.4 384.3 L1892.8 390.2 L1893.7 396.6 L1893.2 401.6 L1892.6 406.5 L1892.4 411.9 L1892.1 417.0 L1891.6 422.0 L1892.0 428.0 L1893.0 434.5 L1892.9 439.9 L1893.3 445.8 L1892.5 450.5 L1892.2 455.7 L1892.5 461.5 L1892.2 466.7 L1892.7 472.7 L1893.8 479.3 L1894.0 485.0 L1893.7 490.2 L1893.5 495.6 L1893.9 501.5 L1893.9 507.0 L1893.3 511.9 L1893.0 517.1 L1892.2 521.9 L1892.9 528.0 L1893.0 533.6 L1893.3 539.5 L1893.1 544.7 L1892.2 549.4 L1892.1 554.8 L1893.1 561.3 L1892.4 566.0 L1892.4 571.6 L1892.4 577.1 L1892.5 582.7 L1893.4 589.1 L1893.7 594.9 L1892.7 599.5 L1892.8 605.1 L1892.6 610.3 L1892.7 616.0 L1892.4 621.2 L1891.9 626.2 L1891.8 631.6 L1892.3 637.6 L1893.4 644.2 L1892.9 649.2 L1892.5 654.4 L1893.7 661.0 L1893.9 666.8 L1892.8 671.1 L1891.9 675.8 L1891.8 681.1 L1891.8 686.6 L1892.0 692.4 L1891.8 697.7 L1891.9 703.3 L1892.2 709.2 L1893.0 715.4 L1893.7 721.6 L1893.4 726.9 L1892.7 731.7 L1892.6 737.1 L1892.7 742.7 L1892.5 748.0 L1892.2 753.1 L1891.8 758.3 L1892.4 764.4 L1893.3 770.8 L1892.4 775.4 L1892.7 781.2 L1893.3 787.3 L1893.4 792.9 L1892.4 797.4 L1892.1 802.6 L1892.1 808.2 L1892.4 814.0 L1892.9 820.0 L1893.8 826.4 L1893.9 832.1 L1893.4 837.0 L1891.9 841.0 L1891.8 846.4 L1893.1 853.3 L1893.6 859.3 L1893.0 864.2 L1892.6 869.3 L1891.9 874.0 L1892.6 880.2 L1893.7 886.9 L1893.9 892.6 L1893.9 898.2 L1893.7 903.5 L1892.4 907.6 L1891.7 912.5 L1891.9 918.2 L1892.7 924.5 L1893.4 930.7 L1893.9 936.6 L1893.6 941.9 L1893.4 947.2 L1893.4 952.7 L1892.9 957.7 L1892.6 962.9 L1892.2 968.0 L1892.9 974.2 L1892.7 979.6 L1893.5 985.9 L1893.2 991.1 L1892.3 995.7 L1891.8 1000.7 L1892.2 1006.6 L1893.0 1012.9 L1893.0 1018.4 L1891.9 1022.9 L1891.8 1028.2 L1892.6 1034.6 L1892.9 1040.3 L1892.5 1045.4 L1892.3 1050.7 L1892.5 1056.5 L1891.8 1061.3 L1892.1 1067.1 L1892.9 1073.4 L1893.7 1079.7 L1893.6 1085.1 L1893.6 1090.6 L1892.8 1095.4 L1892.1 1100.2 L1892.5 1106.0 L1893.6 1112.7 L1893.3 1117.9 L1892.3 1122.4 L1891.8 1127.4 L1892.6 1133.7 L1893.1 1139.7 L1892.6 1144.7 L1892.4 1150.0 L1893.2 1156.3 L1893.5 1162.2 L1892.3 1166.4 L1891.7 1171.3 L1892.2 1177.3 L1892.7 1183.3 L1892.9 1189.1 L1892.5 1194.2 L1893.1 1200.3 Z M160.9 1190.3 L160.6 1184.5 L160.4 1178.7 L161.1 1173.9 L160.7 1168.0 L160.9 1162.6 L160.2 1156.5 L160.2 1150.9 L160.8 1146.0 L160.6 1140.3 L161.2 1135.3 L160.7 1129.3 L160.0 1123.1 L160.0 1117.6 L160.4 1112.5 L161.0 1107.6 L161.2 1102.2 L160.2 1095.7 L160.1 1090.1 L160.4 1084.8 L161.0 1079.9 L160.1 1073.4 L159.5 1067.4 L159.7 1062.0 L160.4 1057.2 L161.3 1052.6 L161.5 1047.2 L161.4 1041.6 L161.7 1036.4 L161.4 1030.6 L160.4 1024.1 L160.3 1018.4 L161.2 1013.8 L161.0 1008.0 L160.1 1001.6 L160.6 996.6 L160.4 990.9 L160.3 985.2 L160.1 979.6 L159.8 973.7 L159.6 968.0 L159.9 962.8 L160.5 957.8 L161.0 952.8 L160.5 946.8 L161.0 941.7 L160.3 935.6 L160.4 930.1 L161.2 925.4 L161.2 919.9 L160.4 913.6 L159.9 907.5 L160.3 902.4 L160.6 897.2 L161.0 892.1 L160.3 885.8 L160.4 880.4 L160.9 875.4 L160.0 869.0 L160.4 863.8 L161.2 859.1 L160.9 853.3 L159.8 846.7 L159.4 840.8 L159.9 835.7 L160.9 831.2 L160.6 825.3 L161.1 820.3 L161.2 814.9 L160.4 808.6 L160.4 803.1 L161.2 798.4 L160.9 792.5 L160.4 786.5 L160.7 781.3 L160.3 775.3 L159.9 769.4 L159.9 763.8 L160.9 759.4 L161.4 754.4 L161.2 748.6 L161.1 743.0 L160.0 736.3 L159.9 730.8 L160.7 726.0 L161.5 721.3 L161.5 715.7 L160.5 709.3 L160.1 703.3 L160.4 698.0 L160.8 692.9 L161.1 687.7 L160.5 681.6 L161.0 676.6 L161.3 671.3 L161.3 665.9 L161.2 660.2 L160.8 654.3 L160.3 648.3 L160.2 642.6 L160.4 637.3 L160.7 632.1 L160.0 625.8 L160.1 620.4 L160.7 615.5 L160.1 609.4 L159.6 603.3 L159.7 597.9 L160.4 593.1 L160.6 587.8 L161.4 583.1 L161.7 577.8 L161.4 572.0 L160.3 565.4 L159.6 559.2 L159.8 553.8 L160.5 549.0 L160.9 543.9 L160.5 537.9 L160.1 532.1 L160.4 526.8 L160.8 521.7 L161.0 516.4 L161.2 511.1 L161.3 505.6 L160.8 499.6 L160.3 493.5 L160.8 488.5 L160.5 482.7 L160.5 477.2 L160.6 471.7 L160.7 466.4 L160.1 460.2 L159.9 454.5 L159.9 449.0 L160.1 443.7 L161.0 439.0 L160.8 433.3 L160.3 427.3 L160.6 422.0 L161.3 417.2 L160.7 411.1 L160.4 405.2 L161.0 400.3 L161.2 395.0 L161.2 389.5 L160.2 383.0 L160.5 377.7 L161.2 372.9 L161.5 367.7 L161.2 361.8 L160.0 355.1 L159.9 349.5 L159.8 343.8 L160.2 338.7 L161.2 334.2 L161.2 328.7 L161.2 323.2 L160.8 317.3 L161.1 312.0 L160.6 306.0 L160.4 300.2 L161.1 295.5 L161.2 290.0 L160.3 283.6 L160.6 278.4 L160.7 272.9 L160.2 266.9 L160.1 261.3 L159.8 255.5 L159.8 250.0 L160.1 244.8 L160.7 239.8 L160.7 234.3 L160.0 228.0 L159.6 222.1 L160.2 217.2 L160.6 212.1 L160.1 206.1 L160.0 200.4 L160.2 195.1 L160.9 190.3 L160.6 184.5 L159.8 178.1 L159.7 172.5 L160.3 167.5 L160.7 162.4 L160.6 156.9 L159.9 150.6 L160.7 145.5 L163.4 141.4 L166.3 137.0 L170.1 133.5 L175.3 131.8 L181.1 131.8 L186.1 131.3 L191.6 131.2 L196.9 131.1 L202.6 131.3 L208.9 132.1 L214.5 132.2 L219.1 131.2 L224.3 130.9 L230.2 131.3 L235.1 130.7 L240.5 130.6 L247.0 131.6 L252.5 131.5 L258.1 131.7 L263.5 131.5 L269.3 131.8 L274.2 131.3 L279.0 130.5 L284.4 130.4 L290.7 131.2 L296.8 131.7 L302.3 131.8 L307.0 130.9 L312.8 131.2 L318.2 131.2 L323.6 131.1 L328.7 130.7 L334.4 130.8 L340.5 131.4 L346.4 131.8 L351.0 130.9 L356.9 131.2 L363.1 132.0 L368.7 132.0 L373.1 130.9 L378.5 130.8 L385.2 132.0 L390.9 132.2 L395.5 131.3 L400.5 130.8 L406.9 131.7 L412.3 131.5 L418.2 131.9 L423.6 131.8 L428.9 131.7 L433.9 131.1 L439.7 131.4 L444.8 131.0 L450.5 131.2 L456.8 131.9 L462.1 131.8 L466.7 130.8 L472.0 130.7 L477.9 131.0 L483.6 131.2 L488.8 130.9 L493.9 130.5 L499.7 130.8 L506.1 131.7 L511.7 131.8 L516.3 130.8 L522.2 131.3 L527.9 131.5 L532.9 130.9 L538.9 131.4 L543.9 130.9 L549.8 131.3 L555.5 131.5 L560.9 131.4 L566.1 131.0 L571.7 131.1 L577.4 131.3 L582.9 131.3 L588.5 131.5 L593.9 131.3 L599.0 130.9 L604.2 130.6 L610.3 131.2 L615.8 131.2 L621.2 131.0 L627.4 131.7 L633.0 131.8 L637.9 131.2 L643.0 130.8 L648.6 130.9 L653.7 130.5 L659.2 130.5 L665.0 130.8 L670.3 130.6 L676.2 131.0 L681.8 131.1 L686.9 130.7 L692.8 131.1 L698.1 130.9 L704.4 131.6 L710.1 131.8 L715.0 131.2 L720.0 130.6 L725.9 131.0 L731.7 131.3 L737.6 131.7 L742.5 131.2 L748.8 131.9 L754.7 132.3 L760.0 132.1 L765.1 131.7 L770.2 131.2 L776.3 131.9 L781.7 131.8 L787.6 132.2 L792.9 132.0 L797.6 131.1 L803.8 131.8 L809.4 131.9 L813.8 130.8 L819.5 131.0 L825.5 131.4 L830.6 131.1 L836.7 131.6 L841.9 131.3 L847.5 131.5 L852.5 130.9 L858.4 131.3 L864.4 131.8 L869.1 131.0 L874.4 130.8 L880.2 131.1 L885.4 130.8 L890.5 130.3 L896.1 130.4 L902.0 130.8 L908.6 131.9 L914.2 132.0 L919.5 131.8 L924.3 131.1 L930.1 131.4 L935.1 130.9 L941.0 131.2 L946.7 131.5 L952.1 131.3 L958.1 131.8 L963.4 131.6 L968.9 131.6 L974.5 131.7 L979.5 131.1 L985.7 131.9 L991.0 131.7 L996.2 131.4 L1001.9 131.6 L1007.2 131.3 L1013.3 132.0 L1018.5 131.6 L1023.7 131.3 L1029.5 131.6 L1034.6 131.2 L1039.8 130.9 L1045.7 131.3 L1050.8 130.9 L1056.9 131.4 L1062.1 131.2 L1068.1 131.6 L1074.1 132.1 L1079.3 131.8 L1084.5 131.5 L1089.4 130.8 L1094.2 130.2 L1099.7 130.2 L1105.6 130.6 L1111.8 131.3 L1117.3 131.3 L1123.1 131.5 L1128.8 131.7 L1133.4 130.8 L1138.9 130.8 L1144.8 131.2 L1149.5 130.4 L1154.9 130.2 L1160.8 130.6 L1166.2 130.6 L1171.9 130.7 L1177.5 130.9 L1183.5 131.3 L1189.0 131.3 L1194.2 131.0 L1200.1 131.3 L1205.4 131.1 L1210.7 131.0 L1216.9 131.6 L1221.7 131.0 L1226.7 130.4 L1232.4 130.6 L1238.8 131.5 L1244.9 132.1 L1250.2 131.9 L1255.0 131.2 L1260.0 130.6 L1265.4 130.5 L1271.7 131.3 L1277.3 131.4 L1282.6 131.2 L1288.3 131.4 L1293.9 131.5 L1300.0 132.1 L1305.2 131.7 L1310.2 131.2 L1316.0 131.6 L1320.8 130.8 L1326.5 131.1 L1332.0 131.0 L1337.1 130.6 L1342.6 130.6 L1348.8 131.3 L1353.7 130.7 L1359.9 131.4 L1365.9 131.8 L1370.4 130.8 L1375.8 130.7 L1381.9 131.3 L1387.5 131.4 L1393.3 131.7 L1398.8 131.7 L1403.5 130.9 L1408.9 130.7 L1414.3 130.7 L1419.9 130.7 L1426.5 131.8 L1432.2 132.0 L1437.2 131.5 L1442.0 130.8 L1448.4 131.7 L1454.0 131.8 L1459.2 131.5 L1464.9 131.6 L1470.0 131.2 L1474.9 130.7 L1480.2 130.4 L1485.7 130.5 L1491.2 130.4 L1497.2 130.9 L1503.5 131.7 L1509.2 131.9 L1514.8 132.0 L1520.0 131.7 L1524.9 131.1 L1530.6 131.2 L1536.2 131.4 L1542.1 131.7 L1547.2 131.4 L1552.4 131.0 L1558.5 131.6 L1564.3 131.9 L1569.2 131.3 L1574.9 131.5 L1579.6 130.6 L1585.0 130.6 L1590.9 130.9 L1597.2 131.8 L1603.2 132.2 L1608.3 131.8 L1613.4 131.4 L1619.2 131.7 L1624.1 131.1 L1629.6 131.0 L1635.9 131.9 L1641.4 131.8 L1646.8 131.7 L1652.5 131.9 L1658.2 132.1 L1663.3 131.7 L1669.0 131.9 L1674.6 132.0 L1680.0 131.9 L1685.1 131.5 L1690.8 131.6 L1696.1 131.4 L1701.1 130.9 L1706.5 130.8 L1712.3 131.1 L1717.6 130.9 L1723.7 131.5 L1728.5 130.7 L1733.4 130.2 L1739.4 130.7 L1745.9 131.7 L1750.9 131.1 L1755.7 130.4 L1761.0 130.2 L1766.8 130.5 L1773.2 131.4 L1779.0 131.7 L1784.6 131.8 L1789.9 131.5 L1794.7 130.8 L1800.5 131.1 L1806.2 131.3 L1812.3 131.9 L1818.0 132.1 L1823.2 131.8 L1827.9 131.0 L1834.3 131.8 L1840.3 132.3 L1845.4 132.0 L1849.7 130.8 L1854.9 130.5 L1860.3 130.3 L1866.1 130.6 L1872.7 131.7 L1878.0 133.0 L1882.0 135.6 L1884.9 140.0 L1885.6 144.6 L1884.8 149.3 L1884.4 154.4 L1884.6 160.1 L1885.3 166.4 L1884.9 171.4 L1884.8 176.9 L1884.9 182.4 L1884.4 187.4 L1884.6 193.1 L1885.0 199.0 L1885.5 205.0 L1885.1 210.2 L1885.2 215.7 L1885.9 222.0 L1885.7 227.3 L1885.9 233.0 L1885.4 238.0 L1884.6 242.7 L1884.9 248.5 L1885.3 254.4 L1885.6 260.2 L1885.3 265.4 L1885.6 271.1 L1885.3 276.4 L1885.1 281.7 L1885.5 287.6 L1885.0 292.6 L1885.4 298.5 L1884.7 303.3 L1884.2 308.3 L1884.7 314.3 L1885.8 320.9 L1885.9 326.5 L1884.8 330.9 L1885.0 336.7 L1885.4 342.6 L1885.6 348.2 L1885.0 353.1 L1885.1 358.7 L1885.2 364.4 L1885.6 370.3 L1885.3 375.5 L1885.7 381.4 L1885.1 386.2 L1884.9 391.5 L1885.5 397.6 L1885.2 402.9 L1884.8 408.0 L1885.1 413.8 L1884.9 419.1 L1885.6 425.3 L1885.9 431.1 L1885.9 436.6 L1885.6 441.8 L1885.1 446.8 L1885.0 452.2 L1885.3 458.0 L1885.6 463.8 L1885.1 468.8 L1885.4 474.7 L1884.6 479.4 L1884.5 484.7 L1885.0 490.7 L1885.8 497.0 L1885.4 502.2 L1885.3 507.6 L1885.7 513.4 L1885.1 518.3 L1885.1 523.9 L1885.5 529.7 L1885.8 535.6 L1885.9 541.1 L1885.6 546.3 L1885.1 551.3 L1884.8 556.6 L1884.9 562.1 L1885.7 568.5 L1885.8 574.1 L1885.6 579.4 L1884.9 584.2 L1885.2 590.0 L1885.7 596.0 L1885.4 601.2 L1884.8 606.1 L1885.2 612.1 L1885.7 618.0 L1884.9 622.8 L1884.6 627.9 L1884.9 633.8 L1885.7 640.0 L1885.7 645.6 L1884.8 650.1 L1884.5 655.3 L1884.7 661.0 L1884.9 666.8 L1885.1 672.4 L1884.7 677.6 L1884.7 683.1 L1885.0 688.8 L1886.0 695.3 L1885.7 700.6 L1885.0 705.4 L1885.6 711.5 L1884.9 716.3 L1885.2 722.1 L1886.1 728.5 L1886.1 734.0 L1885.8 739.2 L1885.2 744.1 L1884.9 749.3 L1885.2 755.1 L1884.6 760.0 L1884.6 765.5 L1884.7 771.2 L1884.5 776.4 L1885.1 782.5 L1885.8 788.7 L1885.7 794.2 L1885.5 799.4 L1885.5 804.9 L1885.1 810.1 L1884.8 815.2 L1885.2 821.2 L1885.3 826.8 L1885.8 832.8 L1886.0 838.5 L1885.4 843.4 L1885.5 849.0 L1885.7 854.6 L1885.2 859.6 L1885.0 864.9 L1885.7 871.2 L1886.1 877.1 L1886.0 882.5 L1885.9 887.9 L1886.0 893.5 L1885.8 898.8 L1885.6 904.1 L1885.2 909.2 L1885.1 914.6 L1885.2 920.2 L1884.7 925.2 L1885.1 931.1 L1885.8 937.3 L1885.8 942.9 L1885.5 948.0 L1884.9 953.0 L1885.0 958.6 L1885.3 964.3 L1885.4 970.0 L1885.3 975.4 L1885.7 981.3 L1885.9 986.9 L1885.1 991.7 L1885.5 997.6 L1885.7 1003.3 L1885.3 1008.3 L1885.5 1014.0 L1885.8 1019.9 L1884.9 1024.5 L1885.0 1030.1 L1885.0 1035.5 L1885.8 1041.9 L1886.1 1047.7 L1885.4 1052.5 L1884.7 1057.4 L1885.2 1063.3 L1885.5 1069.1 L1885.7 1074.8 L1885.5 1080.1 L1885.7 1085.8 L1885.9 1091.5 L1885.5 1096.6 L1885.4 1102.0 L1885.8 1107.9 L1885.2 1112.8 L1885.4 1118.5 L1885.4 1124.0 L1885.5 1129.6 L1885.1 1134.8 L1885.8 1140.9 L1885.1 1145.8 L1884.4 1150.6 L1884.7 1156.4 L1884.8 1162.0 L1884.5 1167.2 L1884.9 1173.1 L1885.2 1178.9 L1885.5 1184.7 L1885.3 1190.0 Z"/></svg>
</body></html>
